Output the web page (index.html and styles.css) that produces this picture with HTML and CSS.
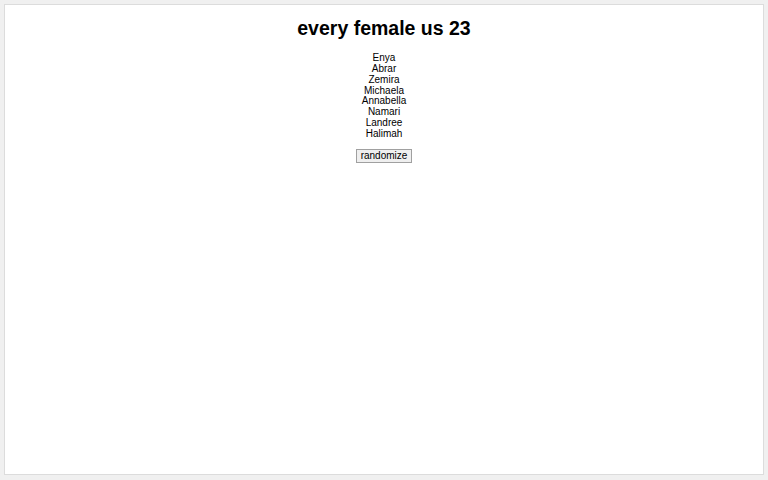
FILE: index.html
```html
<!DOCTYPE html>
<html lang="en">
<head>
    <meta charset="UTF-8">
    <meta name="viewport" content="width=device-width, initial-scale=1.0">
    <title>every female us 23</title>
    <link rel="stylesheet" href="styles.css">
</head>
<body>
    <div class="page">
        <h1>every female us 23</h1>
        <ul class="names" id="names">
            <li>Enya</li>
            <li>Abrar</li>
            <li>Zemira</li>
            <li>Michaela</li>
            <li>Annabella</li>
            <li>Namari</li>
            <li>Landree</li>
            <li>Halimah</li>
        </ul>
        <button class="randomize">randomize</button>
    </div>
</body>
</html>
```

FILE: styles.css
```css
body {
    font-family: "Liberation Sans", Arial, sans-serif;
    background-color: #f0f0f0;
    margin: 0;
    padding: 4px;
}
.page {
    background-color: #fff;
    border: 1px solid #dcdcdc;
    height: 471px;
    box-sizing: border-box;
    text-align: center;
}
.page h1 {
    margin: 0;
    padding-top: 11px;
    font-size: 19.5px;
    line-height: 24px;
}
.names {
    list-style: none;
    margin: 13px 0 0;
    padding: 0;
    font-size: 10px;
    line-height: 10.85px;
}
.randomize {
    margin-top: 9px;
    font-family: "Liberation Sans", Arial, sans-serif;
    font-size: 10px;
    line-height: 12px;
    padding: 0 4px;
    background-color: #efefef;
    border: 1px solid #a0a0a0;
    border-radius: 0;
    color: #000;
}
```
